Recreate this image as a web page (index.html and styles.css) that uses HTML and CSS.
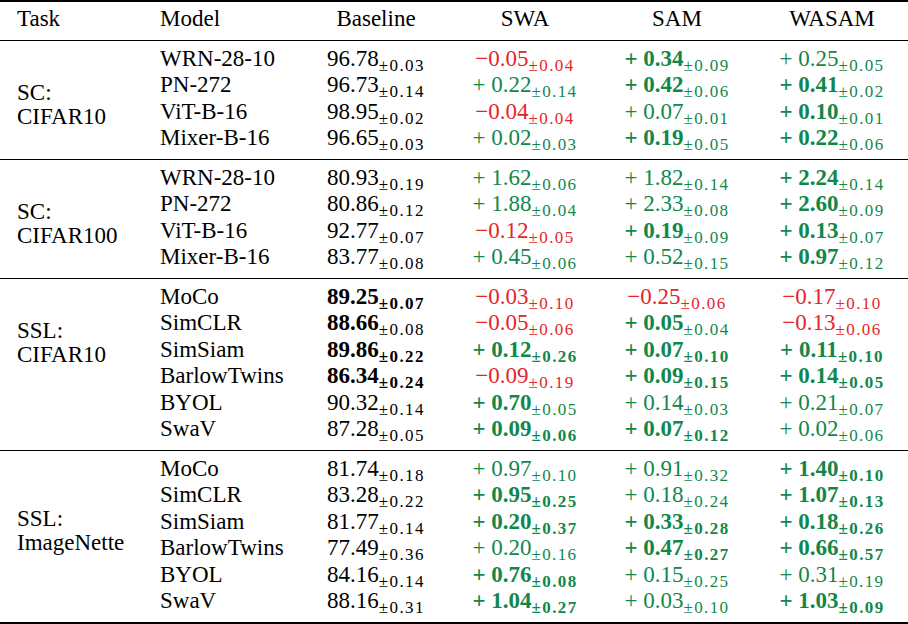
FILE: index.html
```html
<!DOCTYPE html>
<html lang="en">
<head>
<meta charset="utf-8">
<title>Results table</title>
<link rel="stylesheet" href="styles.css">
</head>
<body>
<table class="results">
  <colgroup>
    <col class="c-task">
    <col class="c-model">
    <col class="c-base">
    <col class="c-swa">
    <col class="c-sam">
    <col class="c-wasam">
  </colgroup>
  <thead>
    <tr>
      <th class="task">Task</th>
      <th class="model">Model</th>
      <th>Baseline</th>
      <th>SWA</th>
      <th>SAM</th>
      <th>WASAM</th>
    </tr>
  </thead>
  <tbody class="block">
    <tr class="first">
      <td class="task t1" rowspan="4"><div class="task-label">SC:<br>CIFAR10</div></td>
      <td class="model">WRN-28-10</td>
      <td>96.78<sub>±0.03</sub></td>
      <td class="neg">−0.05<sub>±0.04</sub></td>
      <td class="pos"><b>+ 0.34</b><sub>±0.09</sub></td>
      <td class="pos">+ 0.25<sub>±0.05</sub></td>
    </tr>
    <tr>
      <td class="model">PN-272</td>
      <td>96.73<sub>±0.14</sub></td>
      <td class="pos">+ 0.22<sub>±0.14</sub></td>
      <td class="pos"><b>+ 0.42</b><sub>±0.06</sub></td>
      <td class="pos"><b>+ 0.41</b><sub>±0.02</sub></td>
    </tr>
    <tr>
      <td class="model">ViT-B-16</td>
      <td>98.95<sub>±0.02</sub></td>
      <td class="neg">−0.04<sub>±0.04</sub></td>
      <td class="pos">+ 0.07<sub>±0.01</sub></td>
      <td class="pos"><b>+ 0.10</b><sub>±0.01</sub></td>
    </tr>
    <tr class="last">
      <td class="model">Mixer-B-16</td>
      <td>96.65<sub>±0.03</sub></td>
      <td class="pos">+ 0.02<sub>±0.03</sub></td>
      <td class="pos"><b>+ 0.19</b><sub>±0.05</sub></td>
      <td class="pos"><b>+ 0.22</b><sub>±0.06</sub></td>
    </tr>
  </tbody>
  <tbody class="block">
    <tr class="first">
      <td class="task t2" rowspan="4"><div class="task-label">SC:<br>CIFAR100</div></td>
      <td class="model">WRN-28-10</td>
      <td>80.93<sub>±0.19</sub></td>
      <td class="pos">+ 1.62<sub>±0.06</sub></td>
      <td class="pos">+ 1.82<sub>±0.14</sub></td>
      <td class="pos"><b>+ 2.24</b><sub>±0.14</sub></td>
    </tr>
    <tr>
      <td class="model">PN-272</td>
      <td>80.86<sub>±0.12</sub></td>
      <td class="pos">+ 1.88<sub>±0.04</sub></td>
      <td class="pos">+ 2.33<sub>±0.08</sub></td>
      <td class="pos"><b>+ 2.60</b><sub>±0.09</sub></td>
    </tr>
    <tr>
      <td class="model">ViT-B-16</td>
      <td>92.77<sub>±0.07</sub></td>
      <td class="neg">−0.12<sub>±0.05</sub></td>
      <td class="pos"><b>+ 0.19</b><sub>±0.09</sub></td>
      <td class="pos"><b>+ 0.13</b><sub>±0.07</sub></td>
    </tr>
    <tr class="last">
      <td class="model">Mixer-B-16</td>
      <td>83.77<sub>±0.08</sub></td>
      <td class="pos">+ 0.45<sub>±0.06</sub></td>
      <td class="pos">+ 0.52<sub>±0.15</sub></td>
      <td class="pos"><b>+ 0.97</b><sub>±0.12</sub></td>
    </tr>
  </tbody>
  <tbody class="block">
    <tr class="first">
      <td class="task t3" rowspan="6"><div class="task-label">SSL:<br>CIFAR10</div></td>
      <td class="model">MoCo</td>
      <td><b>89.25</b><sub class="bold">±0.07</sub></td>
      <td class="neg">−0.03<sub>±0.10</sub></td>
      <td class="neg">−0.25<sub>±0.06</sub></td>
      <td class="neg">−0.17<sub>±0.10</sub></td>
    </tr>
    <tr>
      <td class="model">SimCLR</td>
      <td><b>88.66</b><sub>±0.08</sub></td>
      <td class="neg">−0.05<sub>±0.06</sub></td>
      <td class="pos"><b>+ 0.05</b><sub>±0.04</sub></td>
      <td class="neg">−0.13<sub>±0.06</sub></td>
    </tr>
    <tr>
      <td class="model">SimSiam</td>
      <td><b>89.86</b><sub class="bold">±0.22</sub></td>
      <td class="pos"><b>+ 0.12</b><sub class="bold">±0.26</sub></td>
      <td class="pos"><b>+ 0.07</b><sub class="bold">±0.10</sub></td>
      <td class="pos"><b>+ 0.11</b><sub class="bold">±0.10</sub></td>
    </tr>
    <tr>
      <td class="model">BarlowTwins</td>
      <td><b>86.34</b><sub class="bold">±0.24</sub></td>
      <td class="neg">−0.09<sub>±0.19</sub></td>
      <td class="pos"><b>+ 0.09</b><sub class="bold">±0.15</sub></td>
      <td class="pos"><b>+ 0.14</b><sub class="bold">±0.05</sub></td>
    </tr>
    <tr>
      <td class="model">BYOL</td>
      <td>90.32<sub>±0.14</sub></td>
      <td class="pos"><b>+ 0.70</b><sub>±0.05</sub></td>
      <td class="pos">+ 0.14<sub>±0.03</sub></td>
      <td class="pos">+ 0.21<sub>±0.07</sub></td>
    </tr>
    <tr class="last">
      <td class="model">SwaV</td>
      <td>87.28<sub>±0.05</sub></td>
      <td class="pos"><b>+ 0.09</b><sub class="bold">±0.06</sub></td>
      <td class="pos"><b>+ 0.07</b><sub class="bold">±0.12</sub></td>
      <td class="pos">+ 0.02<sub>±0.06</sub></td>
    </tr>
  </tbody>
  <tbody class="block end">
    <tr class="first">
      <td class="task t4" rowspan="6"><div class="task-label">SSL:<br>ImageNette</div></td>
      <td class="model">MoCo</td>
      <td>81.74<sub>±0.18</sub></td>
      <td class="pos">+ 0.97<sub>±0.10</sub></td>
      <td class="pos">+ 0.91<sub>±0.32</sub></td>
      <td class="pos"><b>+ 1.40</b><sub class="bold">±0.10</sub></td>
    </tr>
    <tr>
      <td class="model">SimCLR</td>
      <td>83.28<sub>±0.22</sub></td>
      <td class="pos"><b>+ 0.95</b><sub class="bold">±0.25</sub></td>
      <td class="pos">+ 0.18<sub>±0.24</sub></td>
      <td class="pos"><b>+ 1.07</b><sub class="bold">±0.13</sub></td>
    </tr>
    <tr>
      <td class="model">SimSiam</td>
      <td>81.77<sub>±0.14</sub></td>
      <td class="pos"><b>+ 0.20</b><sub class="bold">±0.37</sub></td>
      <td class="pos"><b>+ 0.33</b><sub class="bold">±0.28</sub></td>
      <td class="pos"><b>+ 0.18</b><sub class="bold">±0.26</sub></td>
    </tr>
    <tr>
      <td class="model">BarlowTwins</td>
      <td>77.49<sub>±0.36</sub></td>
      <td class="pos">+ 0.20<sub>±0.16</sub></td>
      <td class="pos"><b>+ 0.47</b><sub class="bold">±0.27</sub></td>
      <td class="pos"><b>+ 0.66</b><sub class="bold">±0.57</sub></td>
    </tr>
    <tr>
      <td class="model">BYOL</td>
      <td>84.16<sub>±0.14</sub></td>
      <td class="pos"><b>+ 0.76</b><sub class="bold">±0.08</sub></td>
      <td class="pos">+ 0.15<sub>±0.25</sub></td>
      <td class="pos">+ 0.31<sub>±0.19</sub></td>
    </tr>
    <tr class="last">
      <td class="model">SwaV</td>
      <td>88.16<sub>±0.31</sub></td>
      <td class="pos"><b>+ 1.04</b><sub class="bold">±0.27</sub></td>
      <td class="pos">+ 0.03<sub>±0.10</sub></td>
      <td class="pos"><b>+ 1.03</b><sub class="bold">±0.09</sub></td>
    </tr>
  </tbody>
</table>
</body>
</html>
```
FILE: styles.css
```css
html, body {
  margin: 0;
  padding: 0;
  background: #ffffff;
}

body {
  font-family: "Liberation Serif", "Times New Roman", serif;
  color: #000000;
}

.results {
  width: 908px;
  border-collapse: collapse;
  table-layout: fixed;
  font-size: 23px;
  line-height: 26.5px;
}

.c-task { width: 160px; }
.c-model { width: 140px; }
.c-base { width: 152px; }
.c-swa { width: 146px; }
.c-sam { width: 158px; }
.c-wasam { width: 152px; }

.results th {
  font-weight: normal;
  text-align: center;
  padding: 4px 0 7.5px;
  border-top: 2px solid #000;
  border-bottom: 1px solid #000;
  white-space: nowrap;
}

.results td {
  padding: 0;
  text-align: center;
  vertical-align: baseline;
  white-space: nowrap;
}

.results .task {
  text-align: left;
  padding-left: 17px;
}

.results .model {
  text-align: left;
}

.results tr.first td {
  padding-top: 4.5px;
}

.results tr.last td {
  padding-bottom: 7.5px;
}

.block {
  border-bottom: 1px solid #000;
}

.block.end {
  border-bottom: 2px solid #000;
}

.results tr.first td.task {
  vertical-align: top;
  padding-top: 40px;
}

.results tr.first td.t4 {
  padding-top: 56px;
}

.task-label {
  line-height: 24px;
}

sub {
  font-size: 17px;
  line-height: 0;
  vertical-align: -4.5px;
  letter-spacing: 1.4px;
}

sub.bold {
  font-weight: bold;
}

.pos {
  color: #12874b;
}

.neg {
  color: #e3262b;
}
```
